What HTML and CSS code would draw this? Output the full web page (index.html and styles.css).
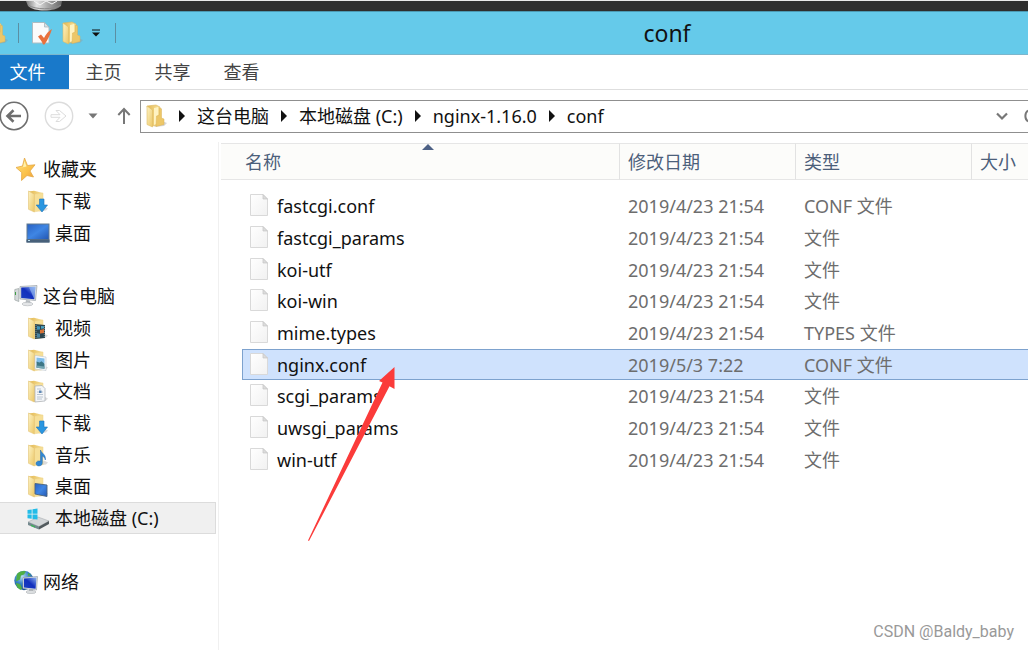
FILE: index.html
```html
<!DOCTYPE html>
<html lang="zh-CN">
<head>
    <meta charset="UTF-8">
    <meta name="viewport" content="width=device-width, initial-scale=1.0">
    <title>conf</title>
    <link rel="stylesheet" href="styles.css">
</head>
<body>
    <!-- iconos compartidos -->
    <svg class="defs" aria-hidden="true">
        <defs>
            <linearGradient id="gFront" x1="0" y1="0" x2="1" y2="1">
                <stop offset="0" stop-color="#fdf3c4"/><stop offset="1" stop-color="#ecc766"/>
            </linearGradient>
            <linearGradient id="gBack" x1="0" y1="0" x2="1" y2="0">
                <stop offset="0" stop-color="#e3b850"/><stop offset="1" stop-color="#f8e29c"/>
            </linearGradient>
            <linearGradient id="gScreen" x1="0" y1="1" x2="1" y2="0">
                <stop offset="0" stop-color="#1a3fc0"/><stop offset=".5" stop-color="#1330bd"/><stop offset="1" stop-color="#8fb4f2"/>
            </linearGradient>
            <linearGradient id="gDesk" x1="0" y1="0" x2="1" y2="1">
                <stop offset="0" stop-color="#2a62c4"/><stop offset=".5" stop-color="#3f86e4"/><stop offset="1" stop-color="#2458b4"/>
            </linearGradient>
            <linearGradient id="gPage" x1="0" y1="0" x2="1" y2="1">
                <stop offset="0" stop-color="#ffffff"/><stop offset="1" stop-color="#f1f1f1"/>
            </linearGradient>
            <radialGradient id="gGlobe" cx=".4" cy=".3" r=".7">
                <stop offset="0" stop-color="#b9def5"/><stop offset=".5" stop-color="#3b86c8"/><stop offset="1" stop-color="#124d8f"/>
            </radialGradient>
            <linearGradient id="gStar" x1="0" y1="0" x2="1" y2="1">
                <stop offset="0" stop-color="#ffe27a"/><stop offset=".6" stop-color="#fbc14a"/><stop offset="1" stop-color="#ee9a3a"/>
            </linearGradient>
            <linearGradient id="gBin" x1="0" y1="0" x2="1" y2="0">
                <stop offset="0" stop-color="#777"/><stop offset=".3" stop-color="#e4e4e4"/><stop offset=".6" stop-color="#aaa"/><stop offset="1" stop-color="#666"/>
            </linearGradient>
        </defs>
        <symbol id="folderBase" viewBox="0 0 22 24">
            <path d="M12 22.500l7-1 2-2-4-2z" fill="#999" opacity=".35"/>
            <path d="M2 2.500l5-.8 9 2.200V21l-8 1z" fill="url(#gBack)"/>
            <path d="M7.300 5.200L16 4v17.600l-8.700 1.200z" fill="#f6df97" stroke="#ecd28a" stroke-width=".5"/>
            <path d="M1.500 2l5.800 3.200V23L1.500 20.300z" fill="url(#gFront)" stroke="#e3c274" stroke-width=".6"/>
        </symbol>
        <symbol id="folder" viewBox="0 0 22 24">
            <path d="M9 23l10-1 3-3-5-2z" fill="#999" opacity=".4"/>
            <path d="M2 2l9-1 4 2v18l-8 1z" fill="url(#gBack)" stroke="#dcb65a" stroke-width=".6"/>
            <path d="M2 2l5.500 4v17L2 20.500z" fill="url(#gFront)" stroke="#dfbd66" stroke-width=".6"/>
            <path d="M9 4l4-1v16l-4 2z" fill="#fff3c2"/>
            <path d="M11.500 12l3-1v-7l2 .8V14l2.500 1v5.500l-8 2z" fill="#edc768" stroke="#dbb358" stroke-width=".5"/>
        </symbol>
        <symbol id="download" viewBox="0 0 22 24">
            <use href="#folderBase"/>
            <path d="M12.500 10h4.500v6h3.500L15 23l-5.800-7h3.300z" fill="#2a96e0" stroke="#1d73bd" stroke-width=".6"/>
        </symbol>
        <symbol id="video" viewBox="0 0 22 24">
            <use href="#folderBase"/>
            <path d="M8 8l10 1v13l-10 1z" fill="#2c4650"/>
            <path d="M10 10l3 .4v3l-3 .3z" fill="#3d93bb"/>
            <path d="M13 14l4-1v4l-4 .5z" fill="#d67135"/>
            <path d="M10 17l3 1v3.500l-3 .3z" fill="#4a83a0"/>
            <path d="M14 10l3 .3v2l-3 .5z" fill="#4aa2c4"/>
            <path d="M9 9v13M17.300 10v12" stroke="#a8b5b5" stroke-width=".7" stroke-dasharray="1 1"/>
        </symbol>
        <symbol id="picture" viewBox="0 0 22 24">
            <use href="#folderBase"/>
            <path d="M8 7.500l11 1.500v13.500L8 21z" fill="#f7fafc" stroke="#bcc5cd" stroke-width=".6"/>
            <path d="M9.500 9.500l8 1v5l-8-1z" fill="#7fbdea"/>
            <path d="M9.500 13.500l3 1 2-1.200 3 2.500v5l-8-1z" fill="#3d7686"/>
            <path d="M9.500 17.500l8 1v2.300l-8-1z" fill="#75a6b3"/>
        </symbol>
        <symbol id="document" viewBox="0 0 22 24">
            <use href="#folderBase"/>
            <path d="M8 7l7-.5 3 3V22l-10 1z" fill="#f4f6f8" stroke="#a7adb5" stroke-width=".7"/>
            <path d="M10 10h4M10 13h6M10 15.500h6M10 18h6M10 20h5" stroke="#b3c0cd" stroke-width=".9"/>
            <path d="M12 11.500h2.500v2.500H12z" fill="#5f88b5"/>
        </symbol>
        <symbol id="music" viewBox="0 0 22 24">
            <use href="#folderBase"/>
            <path d="M13.500 7c1 3.500 5.800 4.500 4.800 10-.4-2.200-1.600-3.400-3-4v7c0 3.600-6.300 3.900-6.300.6 0-2.400 2.600-3.200 4.500-2.300z" fill="#3088d4" stroke="#1f65ac" stroke-width=".5"/>
        </symbol>
        <symbol id="deskFolder" viewBox="0 0 22 24">
            <use href="#folderBase"/>
            <path d="M8 9.500l12 1.500v11.500L8 20z" fill="url(#gDesk)" stroke="#49637f" stroke-width=".9"/>
        </symbol>
        <symbol id="desktop" viewBox="0 0 24 24">
            <path d="M.5 2.500h23v19H.5z" fill="#60798f"/>
            <path d="M1.500 3.500h21V18h-21z" fill="url(#gDesk)"/>
            <path d="M.5 18.500h23v3H.5z" fill="#47607a"/>
            <path d="M2 19.500h2" stroke="#b8ddee"/>
        </symbol>
        <symbol id="star" viewBox="0 0 22 24">
            <path d="M9.500 1l3 7.500 7.500-.7-5 6.200 3.500 6-6.500-1.500L6.500 23.500l.2-8L1 10.500l6.500-1.500z" fill="url(#gStar)" stroke="#e3a848" stroke-width=".8"/>
            <path d="M9.500 4l2 5.500-7.500 1.500 4-.9z" fill="#fff1ad"/>
        </symbol>
        <symbol id="computer" viewBox="0 0 24 24">
            <path d="M.8 5.500l4-1v13l-4-1.500z" fill="#d5dadb" stroke="#8f9898" stroke-width=".6"/>
            <path d="M1.500 8v3" stroke="#3f9c45"/>
            <path d="M6 2.500l17-1-1.500 15L6 15z" fill="#dfe3e6" stroke="#8c949b" stroke-width=".6"/>
            <path d="M7.200 3.500l14.300-.8-1.200 12.500L7.200 14z" fill="url(#gScreen)"/>
            <path d="M15 3.200l6.500-.5-1.200 12.500z" fill="#9cc1f5" opacity=".6"/>
            <path d="M12 16l4 .5.500 2.500h-5z" fill="#b6bbc0"/>
            <ellipse cx="13.500" cy="20" rx="5.500" ry="1.800" fill="#e3e5e7" stroke="#a7abaf" stroke-width=".5"/>
        </symbol>
        <symbol id="drive" viewBox="0 0 24 24">
            <path d="M2 16l10-5 11 4-10 5.500z" fill="#d4d7d9" stroke="#a1a5a8" stroke-width=".5"/>
            <path d="M2 16l11 4.500v3L2 19z" fill="#74898e"/>
            <path d="M13 20.500L23 15v3l-10 5.500z" fill="#525a5e"/>
            <path d="M5 18.600l4 1.600v1.500l-4-1.600z" fill="#3cb25a"/>
            <path d="M1.500 4l4.200-.6v4.300H1.500zM6.500 3.300l5-.7v5.100h-5zM1.500 8.500h4.200v4.300l-4.200-.6zM6.500 8.500h5v5.100l-5-.7z" fill="#23bce8"/>
        </symbol>
        <symbol id="network" viewBox="0 0 24 24">
            <circle cx="10" cy="10.500" r="9.700" fill="url(#gGlobe)"/>
            <path d="M3 4c3-3 6-3.500 9-2.500l-2 3-3 1-1 4-4 2zM2 13l4 1 2 4-1 2c-3-1-5-4-5-7zM14 3l3 2-3 1z" fill="#4fae46"/>
            <path d="M9 7.500L23.500 6.500l-1 13.500L9 18.500z" fill="#dfe4e8" stroke="#8d969e" stroke-width=".6"/>
            <path d="M10 8.500l12.500-.9-.9 11.200L10 17.500z" fill="url(#gScreen)"/>
            <path d="M15 19h4v2h-4z" fill="#aeb3b8"/>
            <ellipse cx="17" cy="22" rx="5" ry="1.600" fill="#dcdfe1" stroke="#a0a5a9" stroke-width=".5"/>
        </symbol>
        <symbol id="file" viewBox="0 0 18 22">
            <path d="M.5.500h12.500l4.500 4.500v16.500H.5z" fill="url(#gPage)" stroke="#d9d9d9"/>
            <path d="M13 .5V5h4.500z" fill="#dcdcdc" stroke="#c4c4c4" stroke-width=".7"/>
        </symbol>
        <symbol id="crumb" viewBox="0 0 6 12">
            <path d="M0 0l6 6-6 6z" fill="#111"/>
        </symbol>
    </svg>

    <div class="desktop-strip">
        <svg class="bin" viewBox="0 0 42 10"><path d="M1 0h36l-1 5C30 11 9 11 3 5z" fill="url(#gBin)"/><path d="M3 4c7 5 26 5 33 0" stroke="#8a8a8a" fill="none"/><path d="M9 0l6 4 6-4 6 3 5-3" stroke="#f5f5f5" fill="none"/></svg>
    </div>

    <div class="titlebar">
        <svg class="cut-folder" viewBox="14 0 8 24"><use href="#folder" width="22" height="24"/></svg>
        <span class="divider"></span>
        <button class="quick" aria-label="属性">
            <svg width="22" height="24" viewBox="0 0 22 24">
                <path d="M1.500 1.500h12l4.500 4.500v16h-16.500z" fill="#fbfbfb" stroke="#aebcc2"/>
                <path d="M13.500 1.500V6H18z" fill="#d9e1e4" stroke="#9fb0b8" stroke-width=".7"/>
                <path d="M7 15.500l3-2 3 3.500c2-4 4.500-7 8-9-1.500 5-4 10.500-7.500 15.500h-1.500C11 20.500 9 18 7 15.500z" fill="#e8703c"/>
            </svg>
        </button>
        <button class="quick" aria-label="新建文件夹">
            <svg width="22" height="24"><use href="#folder"/></svg>
        </button>
        <button class="quick more" aria-label="自定义快速访问工具栏">
            <svg width="10" height="8" viewBox="0 0 10 8"><path d="M1 1h8" stroke="#111"/><path d="M1 3.500h8L5 7.500z" fill="#111"/></svg>
        </button>
        <span class="divider"></span>
        <h1>conf</h1>
    </div>

    <div class="tabs">
        <button class="tab active">文件</button>
        <button class="tab">主页</button>
        <button class="tab">共享</button>
        <button class="tab">查看</button>
    </div>

    <div class="navbar">
        <button class="round" aria-label="后退">
            <svg width="30" height="30" viewBox="0 0 30 30" fill="none" stroke="#6e6e6e"><circle cx="15" cy="15" r="13.700" stroke-width="1.600"/><path d="M22 15H9M14.500 9.200L8.500 15l6 5.800" stroke-width="2.600"/></svg>
        </button>
        <button class="round forward" aria-label="前进" disabled>
            <svg width="30" height="30" viewBox="0 0 30 30" fill="none" stroke="#dcdcdc"><circle cx="15" cy="15" r="13.700" stroke-width="1.400"/><path d="M7 13.700h9l-4-4.200h3.500L22 15l-6.500 5.500H12l4-4.200H7z"/></svg>
        </button>
        <button class="history" aria-label="最近浏览的位置">
            <svg width="10" height="6" viewBox="0 0 10 6"><path d="M.5.500h9L5 5.500z" fill="#777"/></svg>
        </button>
        <button class="up" aria-label="上移">
            <svg width="14" height="18" viewBox="0 0 14 18" fill="none" stroke="#777" stroke-width="2"><path d="M7 17V2M1.300 8L7 2l5.700 6"/></svg>
        </button>
        <div class="address">
            <svg width="22" height="24"><use href="#folder"/></svg>
            <svg class="crumb" width="6" height="12"><use href="#crumb"/></svg>
            <a href="#">这台电脑</a>
            <svg class="crumb" width="6" height="12"><use href="#crumb"/></svg>
            <a href="#">本地磁盘 (C:)</a>
            <svg class="crumb" width="6" height="12"><use href="#crumb"/></svg>
            <a href="#">nginx-1.16.0</a>
            <svg class="crumb" width="6" height="12"><use href="#crumb"/></svg>
            <a href="#">conf</a>
            <button class="drop" aria-label="以前的位置">
                <svg width="12" height="9" viewBox="0 0 12 9"><path d="M1 1.500l5 5 5-5" fill="none" stroke="#777" stroke-width="2.200"/></svg>
            </button>
            <button class="refresh" aria-label="刷新">
                <svg width="4" height="16" viewBox="0 0 4 16"><path d="M4 2.500C.5 5 .5 11 4 13.500" fill="none" stroke="#777" stroke-width="2"/></svg>
            </button>
        </div>
    </div>

    <div class="main">
        <nav class="sidebar">
            <ul>
                <li><a href="#" class="root"><svg><use href="#star"/></svg>收藏夹</a></li>
                <li><a href="#"><svg><use href="#download"/></svg>下载</a></li>
                <li><a href="#"><svg><use href="#desktop"/></svg>桌面</a></li>
            </ul>
            <ul>
                <li><a href="#" class="root"><svg><use href="#computer"/></svg>这台电脑</a></li>
                <li><a href="#"><svg><use href="#video"/></svg>视频</a></li>
                <li><a href="#"><svg><use href="#picture"/></svg>图片</a></li>
                <li><a href="#"><svg><use href="#document"/></svg>文档</a></li>
                <li><a href="#"><svg><use href="#download"/></svg>下载</a></li>
                <li><a href="#"><svg><use href="#music"/></svg>音乐</a></li>
                <li><a href="#"><svg><use href="#deskFolder"/></svg>桌面</a></li>
                <li><a href="#" class="current"><svg><use href="#drive"/></svg>本地磁盘 (C:)</a></li>
            </ul>
            <ul>
                <li><a href="#" class="root"><svg><use href="#network"/></svg>网络</a></li>
            </ul>
        </nav>

        <div class="content">
            <table>
                <colgroup>
                    <col class="col-gap">
                    <col>
                    <col class="col-date">
                    <col class="col-type">
                    <col class="col-size">
                </colgroup>
                <thead>
                    <tr>
                        <th colspan="2" class="sorted">名称<svg class="sort" width="12" height="6" viewBox="0 0 12 6"><path d="M0 6l6-6 6 6z" fill="#4d6185"/></svg></th>
                        <th>修改日期</th>
                        <th>类型</th>
                        <th>大小</th>
                    </tr>
                </thead>
                <tbody>
                    <tr><td></td><td class="name"><svg><use href="#file"/></svg>fastcgi.conf</td><td>2019/4/23 21:54</td><td>CONF 文件</td><td></td></tr>
                    <tr><td></td><td class="name"><svg><use href="#file"/></svg>fastcgi_params</td><td>2019/4/23 21:54</td><td>文件</td><td></td></tr>
                    <tr><td></td><td class="name"><svg><use href="#file"/></svg>koi-utf</td><td>2019/4/23 21:54</td><td>文件</td><td></td></tr>
                    <tr><td></td><td class="name"><svg><use href="#file"/></svg>koi-win</td><td>2019/4/23 21:54</td><td>文件</td><td></td></tr>
                    <tr><td></td><td class="name"><svg><use href="#file"/></svg>mime.types</td><td>2019/4/23 21:54</td><td>TYPES 文件</td><td></td></tr>
                    <tr class="selected"><td></td><td class="name"><svg><use href="#file"/></svg>nginx.conf</td><td>2019/5/3 7:22</td><td>CONF 文件</td><td></td></tr>
                    <tr><td></td><td class="name"><svg><use href="#file"/></svg>scgi_params</td><td>2019/4/23 21:54</td><td>文件</td><td></td></tr>
                    <tr><td></td><td class="name"><svg><use href="#file"/></svg>uwsgi_params</td><td>2019/4/23 21:54</td><td>文件</td><td></td></tr>
                    <tr><td></td><td class="name"><svg><use href="#file"/></svg>win-utf</td><td>2019/4/23 21:54</td><td>文件</td><td></td></tr>
                </tbody>
            </table>
            <svg class="pointer" width="88" height="175" viewBox="0 0 88 175"><path d="M86.500 0v22l-5-2.700L1 174l-1-.5L74.500 15.500 71 14z" fill="#fb3b3a"/></svg>
            <p class="watermark">CSDN @Baldy_baby</p>
        </div>
    </div>
</body>
</html>
```
FILE: styles.css
```css
* {
    box-sizing: border-box;
}
body {
    margin: 0;
    min-height: 100vh;
    display: flex;
    flex-direction: column;
    overflow: hidden;
    background: #fff;
    color: #111;
    font-family: "Noto Sans", "Noto Sans CJK SC", sans-serif;
    font-size: 18px;
    line-height: 24px;
}
button {
    padding: 0;
    border: none;
    background: none;
    font: inherit;
    color: inherit;
}
a {
    color: inherit;
    text-decoration: none;
}
svg {
    display: block;
    flex: none;
}
.defs {
    position: absolute;
    width: 0;
    height: 0;
}

/* barra superior */
.desktop-strip {
    height: 11px;
    border-top: 1px solid #e8e8e8;
    background: #2e2e2e;
}
.bin {
    width: 42px;
    height: 10px;
    margin-left: 25px;
}
.titlebar {
    display: flex;
    align-items: center;
    height: 44px;
    padding-bottom: 1px;
    border-top: 1px solid #4c9ab4;
    border-bottom: 1px solid #7cb6cc;
    background: #65caea;
}
.cut-folder {
    width: 8px;
    height: 24px;
}
.divider {
    width: 1px;
    height: 20px;
    margin: 0 10px;
    background: #5b8fa3;
}
.quick {
    margin: 0 4px 0 2px;
}
.quick + .quick {
    margin: 0 4px;
}
.quick.more {
    margin: 0 4px;
}
.titlebar h1 {
    flex: 1;
    margin: 0;
    padding-left: 180px;
    font-size: 23px;
    font-weight: 400;
    text-align: center;
}

.tabs {
    display: flex;
    height: 35px;
    border-bottom: 1px solid #dedede;
}
.tab {
    width: 69px;
    color: #444;
}
.tab.active {
    background: #1979ca;
    color: #fff;
    padding-right: 14px;
}

.navbar {
    display: flex;
    align-items: center;
    height: 52px;
}
.round {
    margin-left: -1px;
}
.forward {
    margin-left: 15px;
}
.history {
    margin-left: 14px;
}
.up {
    margin: 0 9px 0 19px;
}
.address {
    flex: 1;
    display: flex;
    align-items: center;
    height: 33px;
    padding-left: 4px;
    border: 1px solid #8f8f8f;
    border-right: none;
}
.crumb {
    margin: 0 12px;
}
.drop {
    margin-left: auto;
}
.refresh {
    margin-left: 16px;
}

/* panel principal */
.main {
    flex: 1;
    display: flex;
}
.sidebar {
    display: flex;
    flex-direction: column;
    gap: 32px;
    width: 219px;
    padding: 11px 2px 0 0;
    border-right: 1px solid #f0f0f0;
}
.sidebar ul {
    margin: 0;
    padding: 0;
    list-style: none;
}
.sidebar li {
    height: 32px;
}
.sidebar li:nth-child(3n) {
    height: 31px;
}
.sidebar a {
    display: flex;
    align-items: center;
    gap: 5px;
    height: 100%;
    padding-left: 26px;
}
.sidebar a.root {
    padding-left: 14px;
}
.sidebar svg {
    width: 24px;
    height: 24px;
}
.sidebar .current {
    border: 1px solid #dcdcdc;
    border-left: none;
    background: #f0f0f0;
}

.content {
    flex: 1;
    position: relative;
    padding: 1px 0 0 2px;
}
table {
    width: 100%;
    table-layout: fixed;
    border-collapse: separate;
    border-spacing: 0;
}
.col-gap {
    width: 21px;
}
.col-date, .col-type {
    width: 176px;
}
.col-size {
    width: 57px;
}
th {
    height: 37px;
    padding: 0 0 0 8px;
    border-top: 1px solid #e6e6e6;
    border-bottom: 1px solid #e6e6e6;
    border-left: 1px solid #e2e2e2;
    background: #fcfcfa;
    color: #4c607a;
    font-weight: 400;
    text-align: left;
}
th.sorted {
    position: relative;
    padding-left: 24px;
    border-left: none;
}
.sort {
    position: absolute;
    top: 0;
    left: 201px;
}
tbody::before {
    content: "";
    display: block;
    height: 10px;
}
td {
    height: 32px;
    padding: 0 0 0 9px;
    color: #6d6d6d;
    white-space: nowrap;
}
tr:nth-child(3n) td {
    height: 31px;
}
td.name {
    padding-left: 8px;
    color: #111;
}
.name svg {
    display: inline-block;
    width: 18px;
    height: 22px;
    margin-right: 9px;
    vertical-align: top;
}
.selected td + td {
    border-top: 1px solid #7da2ce;
    border-bottom: 1px solid #7da2ce;
    background: #cfe2fd;
}
.selected td.name {
    border-left: 1px solid #7da2ce;
    padding-left: 7px;
}
.pointer {
    position: absolute;
    left: 89px;
    top: 225px;
}
.watermark {
    position: absolute;
    right: 14px;
    bottom: 8px;
    margin: 0;
    color: #999;
    font-family: Roboto, sans-serif;
    font-size: 16px;
    line-height: 20px;
}
```
